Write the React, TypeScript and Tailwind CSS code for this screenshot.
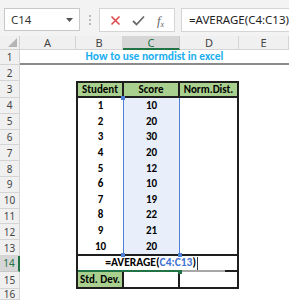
import React from 'react';

const uiFont = "font-['Segoe_UI','Noto_Sans','Liberation_Sans',sans-serif]";
const cellFont = "font-['Carlito','Calibri','Liberation_Sans',sans-serif]";

const scores = [10, 20, 30, 20, 12, 10, 19, 22, 21, 20];

const rowHeads = [
  { n: 1, h: 'h-[15px]' },
  { n: 2, h: 'h-[16px]' },
  { n: 3, h: 'h-[17px]' },
  { n: 4, h: 'h-[15.8px]' },
  { n: 5, h: 'h-[15.8px]' },
  { n: 6, h: 'h-[15.8px]' },
  { n: 7, h: 'h-[15.8px]' },
  { n: 8, h: 'h-[15.8px]' },
  { n: 9, h: 'h-[15.8px]' },
  { n: 10, h: 'h-[15.8px]' },
  { n: 11, h: 'h-[15.8px]' },
  { n: 12, h: 'h-[15.8px]' },
  { n: 13, h: 'h-[15.8px]' },
  { n: 14, h: 'h-[16px]' },
  { n: 15, h: 'h-[17px]' },
  { n: 16, h: 'h-[11px]' },
];

const cols = [
  { l: 'A', w: 'w-[56px]' },
  { l: 'B', w: 'w-[47px]' },
  { l: 'C', w: 'w-[57px]' },
  { l: 'D', w: 'w-[59px]' },
  { l: 'E', w: 'w-[50px]' },
];

function FormulaBar() {
  return (
    <div className={`h-[36px] bg-[#f3f3f3] flex items-start pt-[8px] ${uiFont}`}>
      {/* Name box */}
      <div className="ml-[4px] w-[79px] h-[23px] bg-white border border-[#c8c8c8] flex items-center justify-between pl-[6px] pr-[6px]">
        <span className="text-[11.5px] text-[#333]">C14</span>
        <svg width="7" height="4" viewBox="0 0 7 4">
          <path d="M0 0 L7 0 L3.5 4 Z" fill="#555" />
        </svg>
      </div>
      {/* grip dots */}
      <div className="w-[20px] h-[23px] flex flex-col items-center justify-center gap-[2px]">
        <span className="w-[2px] h-[2px] bg-[#b8b8b8]" />
        <span className="w-[2px] h-[2px] bg-[#b8b8b8]" />
        <span className="w-[2px] h-[2px] bg-[#b8b8b8]" />
      </div>
      {/* buttons */}
      <div className="w-[79px] h-[24px] bg-white border border-[#d4d4d4] flex items-center justify-around px-[4px]">
        <svg width="11" height="11" viewBox="0 0 11 11">
          <path d="M1.5 1.5 L9.5 9.5 M9.5 1.5 L1.5 9.5" stroke="#e0474c" strokeWidth="1.6" />
        </svg>
        <svg width="13" height="11" viewBox="0 0 13 11">
          <path d="M1 6 L4.5 9.5 L12 1.5" stroke="#6b6b6b" strokeWidth="1.8" fill="none" />
        </svg>
        <span className="text-[13px] leading-none italic text-[#666] font-['Liberation_Serif',serif]">
          f<sub className="text-[8px]">x</sub>
        </span>
      </div>
      {/* formula */}
      <div className="ml-[6px] flex-1 h-[24px] bg-white border border-r-0 border-[#d4d4d4] flex items-center pl-[7px]">
        <span className="text-[11.5px] text-[#222] whitespace-nowrap">=AVERAGE(C4:C13)</span>
      </div>
    </div>
  );
}

function Table() {
  return (
    <div className={`w-[163px] h-[208px] border-2 border-[#1e1e1e] flex flex-col ${cellFont} text-[11px] leading-none font-bold text-black`}>
      {/* header */}
      <div className="h-[15px] shrink-0 border-b-2 border-[#1e1e1e] flex bg-[#a9d08e]">
        <div className="w-[46px] border-r-2 border-[#1e1e1e] flex items-center justify-center">Student</div>
        <div className="w-[56px] border-r-2 border-[#1e1e1e] flex items-center justify-center">Score</div>
        <div className="flex-1 flex items-center justify-center">Norm.Dist.</div>
      </div>
      {/* body */}
      <div className="h-[158px] shrink-0 border-b-2 border-[#1e1e1e] flex">
        <div className="w-[45px] flex flex-col">
          {scores.map((_, i) => (
            <div key={i} className="h-[15.6px] flex items-center justify-center">
              {i + 1}
            </div>
          ))}
        </div>
        <div className="relative w-[57px] bg-[#e8eefa] border-x border-[#4f7fd6] flex flex-col">
          {scores.map((s, i) => (
            <div key={i} className="h-[15.6px] flex items-center justify-center">
              {s}
            </div>
          ))}
          <span className="absolute -left-[3px] -top-[2px] w-[4px] h-[4px] bg-[#4f7fd6]" />
          <span className="absolute -left-[3px] -bottom-[3px] w-[4px] h-[4px] bg-[#4f7fd6]" />
          <span className="absolute -right-[3px] -bottom-[3px] w-[4px] h-[4px] bg-[#4f7fd6]" />
        </div>
        <div className="flex-1" />
      </div>
      {/* row 14 */}
      <div className="relative h-[16px] shrink-0 flex flex-col">
        <div className="h-[14px] flex">
          <div className="w-[121px] flex items-center justify-end pr-[1px] whitespace-nowrap text-[11.5px]">
            <span>=AVERAGE(</span>
            <span className="text-[#3f72d3]">C4:C13</span>
            <span>)</span>
            <span className="ml-[1px] w-[1px] h-[13px] bg-[#333]" />
          </div>
          <div className="flex-1" />
        </div>
        <div className="h-[2px] flex">
          <div className="w-[102px] bg-[#217346]" />
          <div className="w-[45px] bg-[#a6a6a6]" />
          <div className="flex-1 bg-[#1e1e1e]" />
        </div>
        <span className="absolute left-[100px] -bottom-[2px] w-[4px] h-[4px] bg-[#217346]" />
      </div>
      {/* row 15 */}
      <div className="flex-1 flex">
        <div className="w-[46px] border-r-2 border-[#1e1e1e] bg-[#a9d08e] flex items-center justify-center whitespace-nowrap">
          Std. Dev.
        </div>
        <div className="w-[56px] border-r-2 border-[#1e1e1e]" />
        <div className="flex-1" />
      </div>
    </div>
  );
}

export default function App() {
  return (
    <div className="w-[289px] h-[300px] overflow-hidden bg-white">
      <FormulaBar />
      <div className="flex">
        {/* row headers */}
        <div className={`w-[20px] flex flex-col ${uiFont}`}>
          <div className="h-[14px] bg-[#f0f0f0] border-r border-b border-[#d4d4d4] relative">
            <svg className="absolute right-[2px] bottom-[2px]" width="9" height="9" viewBox="0 0 9 9">
              <path d="M9 0 L9 9 L0 9 Z" fill="#b5b5b5" />
            </svg>
          </div>
          {rowHeads.map((r) =>
            r.n === 14 ? (
              <div
                key={r.n}
                className={`${r.h} shrink-0 bg-[#d6d6d6] border-r-2 border-r-[#217346] border-b border-b-[#c8c8c8] flex items-center justify-center text-[10px] leading-none text-[#217346]`}
              >
                {r.n}
              </div>
            ) : (
              <div
                key={r.n}
                className={`${r.h} shrink-0 bg-[#f0f0f0] border-r border-b border-[#d4d4d4] flex items-center justify-center text-[10px] leading-none text-[#444]`}
              >
                {r.n}
              </div>
            )
          )}
        </div>
        {/* sheet */}
        <div className="flex-1 flex flex-col">
          <div className={`h-[14px] flex ${uiFont}`}>
            {cols.map((c) =>
              c.l === 'C' ? (
                <div
                  key={c.l}
                  className={`${c.w} bg-[#d6d6d6] border-b-2 border-[#217346] border-r border-r-[#c8c8c8] flex items-center justify-center text-[11px] leading-none text-[#217346]`}
                >
                  {c.l}
                </div>
              ) : (
                <div
                  key={c.l}
                  className={`${c.w} bg-[#f0f0f0] border-b border-r border-[#d4d4d4] flex items-center justify-center text-[11px] leading-none text-[#444]`}
                >
                  {c.l}
                </div>
              )
            )}
          </div>
          <div className={`h-[15px] border-b-2 border-[#8a8a8a] flex items-center justify-center ${cellFont} text-[11.5px] leading-none font-bold text-[#1aaeef]`}>
            How to use normdist in excel
          </div>
          <div className="h-[16px]" />
          <div className="flex">
            <div className="w-[56px]" />
            <Table />
          </div>
        </div>
      </div>
    </div>
  );
}
